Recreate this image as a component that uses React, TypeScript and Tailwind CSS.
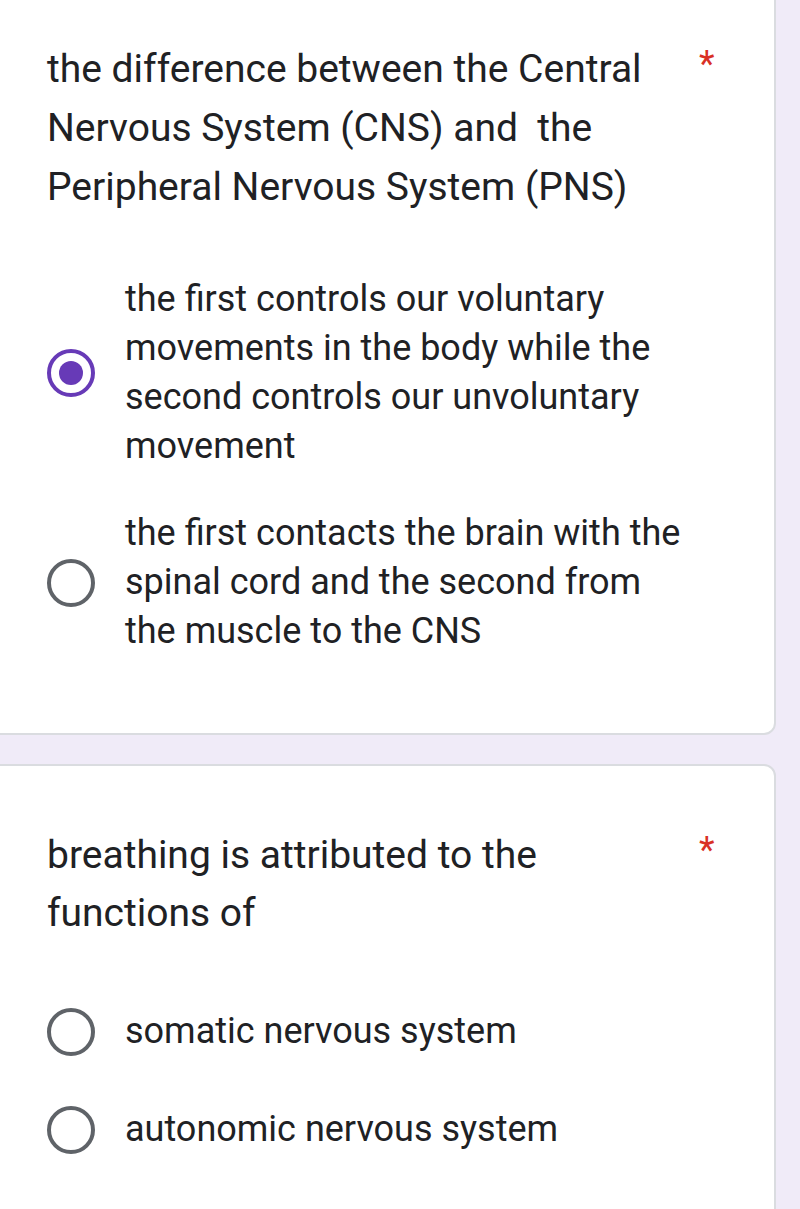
import React from 'react'

const font = { fontFamily: 'Roboto, "Noto Sans", sans-serif' }

function Radio({ checked }: { checked?: boolean }) {
  return (
    <span className={`flex h-12 w-12 shrink-0 items-center justify-center rounded-full border-4 ${checked ? 'border-[#673ab7]' : 'border-[#5f6368]'}`}>
      {checked && <span className="h-6 w-6 rounded-full bg-[#673ab7]" />}
    </span>
  )
}

function Option({ label, checked, className = '' }: { label: string; checked?: boolean; className?: string }) {
  return (
    <div className={`flex items-center ${className}`}>
      <Radio checked={checked} />
      <p className="ml-[30px] w-[562px] text-[36px] leading-[49px] text-[#202124]">{label}</p>
    </div>
  )
}

function Question({ title, lineHeight }: { title: string; lineHeight: string }) {
  return (
    <div className="flex items-start">
      <h2 className={`w-[652px] whitespace-pre-wrap text-[39px] text-[#202124] ${lineHeight}`}>{title}</h2>
      <span className="mt-[4px] text-[36px] leading-[40px] text-[#d93025]">*</span>
    </div>
  )
}

export default function App() {
  return (
    <div className="min-h-screen overflow-hidden bg-[#f0ebf8]" style={font}>
      <section className="-ml-4 mr-6 mt-[-20px] rounded-xl border-2 border-[#dadce0] bg-white pb-[77px] pl-[61px] pt-[58px]">
        <Question title={'the difference between the Central Nervous System (CNS) and  the Peripheral Nervous System (PNS)'} lineHeight="leading-[59px]" />
        <Option className="mt-[58px]" checked label="the first controls our voluntary movements in the body while the second controls our unvoluntary movement" />
        <Option className="mt-[38px]" label="the first contacts the brain with the spinal cord and the second from the muscle to the CNS" />
      </section>
      <section className="-ml-4 mr-6 mt-[29px] rounded-xl border-2 border-[#dadce0] bg-white pb-[80px] pl-[61px] pt-[60px]">
        <Question title="breathing is attributed to the functions of" lineHeight="leading-[58px]" />
        <Option className="mt-[65px]" label="somatic nervous system" />
        <Option className="mt-[49px]" label="autonomic nervous system" />
      </section>
    </div>
  )
}
